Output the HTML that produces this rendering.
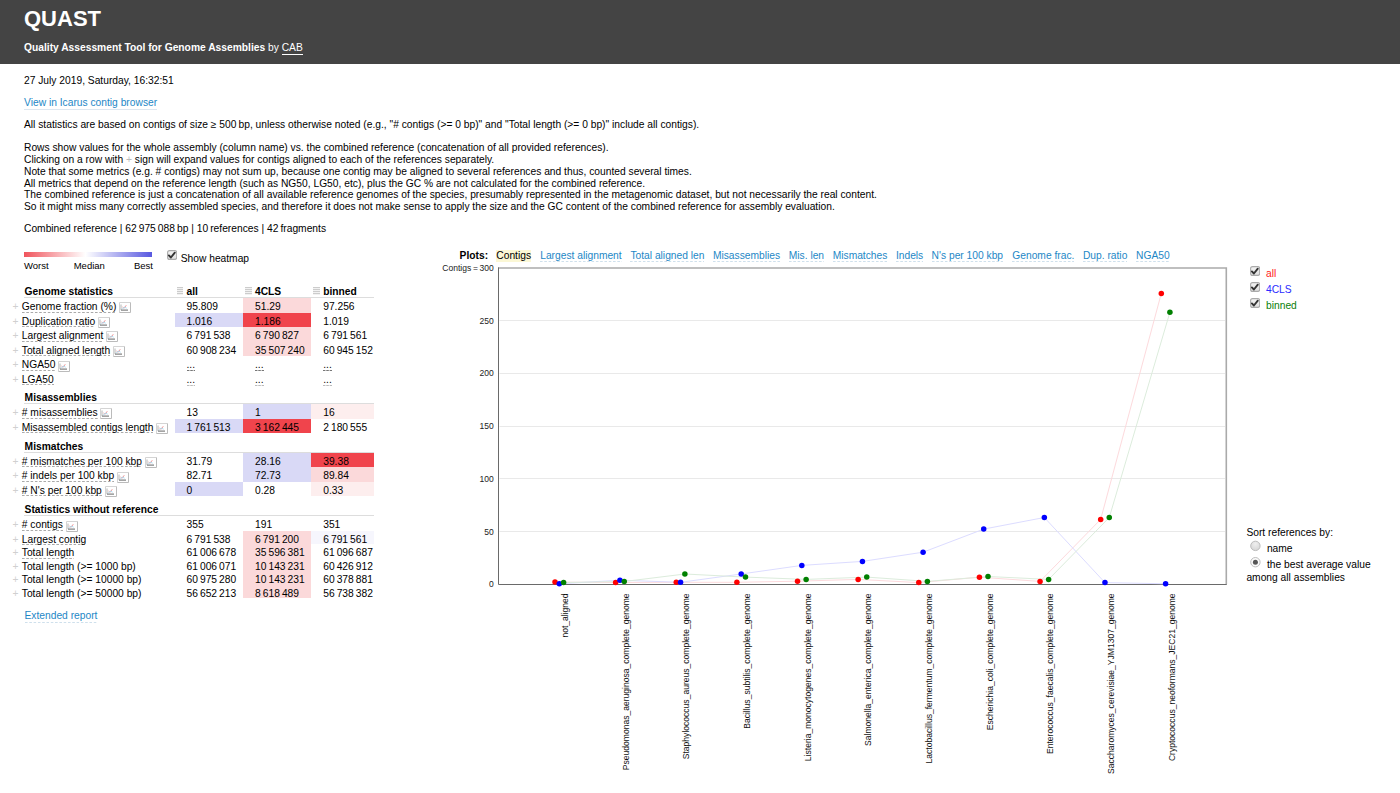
<!DOCTYPE html>
<html><head><meta charset="utf-8">
<style>
html,body{margin:0;padding:0;background:#fff;}
body{width:1400px;height:793px;overflow:hidden;position:relative;font-family:"Liberation Sans",sans-serif;font-size:10.25px;color:#000;}
.a{position:absolute;white-space:nowrap;line-height:12px;}
.b{font-weight:bold;}
#hdr{position:absolute;left:0;top:0;width:1400px;height:64px;background:#444;}
#hdr .t{position:absolute;left:24px;top:5px;font-weight:bold;font-size:22px;line-height:28px;color:#fff;}
#hdr .s{position:absolute;left:24px;top:41.8px;font-size:10.25px;line-height:12px;color:#fff;white-space:nowrap;}
#hdr .s b{font-weight:bold;}
#hdr .s u{text-decoration:none;border-bottom:1px solid #fff;padding-bottom:1px;}
.lnk{color:#1d87c6;}
.ul{border-bottom:1px solid #dde7f0;padding-bottom:1px;}
.dul{background-image:linear-gradient(to right,#aaa 60%,transparent 60%);background-size:4.3px 1px;background-repeat:repeat-x;background-position:0 100%;padding-bottom:0.5px;}
.dot{background-image:linear-gradient(to right,var(--dc) 75%,transparent 75%);background-size:3.3px 1px;background-repeat:repeat-x;background-position:0 100%;padding-bottom:1px;}
.ldul{background-image:linear-gradient(to right,#cfe0ec 60%,transparent 60%);background-size:4.3px 1px;background-repeat:repeat-x;background-position:0 100%;padding-bottom:2px;}
.pl{color:#d0d0d0;}
.ic{vertical-align:-3.4px;}
.cell{position:absolute;}
.sep{position:absolute;left:24px;width:350px;height:1px;background:#ddd;}
.hd{position:absolute;width:6.5px;height:8px;background:repeating-linear-gradient(to bottom,#ccc 0,#ccc 1.3px,#f2f2f2 1.3px,#f2f2f2 2px);}
.cb{position:absolute;width:10.3px;height:10px;}
.tab{position:absolute;white-space:nowrap;line-height:12px;color:#1d87c6;}
.tab span{background-image:linear-gradient(to right,#cfe0ec 60%,transparent 60%);background-size:4.3px 1px;background-repeat:repeat-x;background-position:0 100%;padding-bottom:1.5px;}
</style></head><body>
<div id="hdr">
<div class="t">QUAST</div>
<div class="s"><b>Quality Assessment Tool for Genome Assemblies</b> by <u>CAB</u></div>
</div>

<div class="a" style="left:24px;top:75.3px">27 July 2019, Saturday, 16:32:51</div>
<div class="a lnk" style="left:24px;top:96.9px"><span class="ul">View in Icarus contig browser</span></div>
<div class="a" style="left:24px;top:119.3px">All statistics are based on contigs of size ≥ 500&#8201;bp, unless otherwise noted (e.g., "# contigs (&gt;= 0 bp)" and "Total length (&gt;= 0 bp)" include all contigs).</div>
<div class="a" style="left:24px;top:141.9px;line-height:11.88px">Rows show values for the whole assembly (column name) vs. the combined reference (concatenation of all provided references).<br>Clicking on a row with <span style="color:#bbb">+</span> sign will expand values for contigs aligned to each of the references separately.<br>Note that some metrics (e.g. # contigs) may not sum up, because one contig may be aligned to several references and thus, counted several times.<br>All metrics that depend on the reference length (such as NG50, LG50, etc), plus the GC % are not calculated for the combined reference.<br>The combined reference is just a concatenation of all available reference genomes of the species, presumably represented in the metagenomic dataset, but not necessarily the real content.<br>So it might miss many correctly assembled species, and therefore it does not make sense to apply the size and the GC content of the combined reference for assembly evaluation.</div>
<div class="a" style="left:24px;top:223.1px">Combined reference | 62&#8201;975&#8201;088&#8201;bp | 10&#8201;references | 42&#8201;fragments</div>

<!-- heatmap legend -->
<div style="position:absolute;left:24px;top:252px;width:128.3px;height:5px;background:linear-gradient(to right,#f0545c,#fff 48%,#5858e0)"></div>
<div class="a" style="left:24px;top:260.2px;font-size:9.5px;line-height:11px">Worst</div>
<div class="a" style="left:73.7px;top:260.2px;font-size:9.5px;line-height:11px">Median</div>
<div class="a" style="left:133.9px;top:260.2px;font-size:9.5px;line-height:11px">Best</div>
<div class="cb" style="left:167.1px;top:250.4px"><svg width="10.3" height="10" viewBox="0 0 10.3 10"><defs><linearGradient id="cg" x1="0" y1="0" x2="0" y2="1"><stop offset="0" stop-color="#f4f4f4"/><stop offset="1" stop-color="#dedede"/></linearGradient></defs><rect x="0.6" y="0.6" width="9.1" height="8.8" rx="2" fill="url(#cg)" stroke="#aaa" stroke-width="1.1"/><path d="M1.9 5.4 L3.9 7.5 L7.8 2.7" stroke="#333" stroke-width="1.9" fill="none" stroke-linecap="round" stroke-linejoin="round"/></svg></div>
<div class="a" style="left:180.7px;top:252.8px">Show heatmap</div>

<div class="a b" style="left:24.6px;top:286.00px">Genome statistics</div>
<div class="hd" style="left:176.70px;top:286.75px"></div>
<div class="a b" style="left:186.50px;top:286.00px">all</div>
<div class="hd" style="left:245.20px;top:286.75px"></div>
<div class="a b" style="left:255.00px;top:286.00px">4CLS</div>
<div class="hd" style="left:313.40px;top:286.75px"></div>
<div class="a b" style="left:323.20px;top:286.00px">binned</div>
<div class="sep" style="top:297.00px"></div>
<div class="cell" style="left:243.0px;top:298.00px;width:68.20px;height:14.55px;background:#fbd9da"></div>
<div class="a pl" style="left:12.6px;top:301.00px">+</div>
<div class="a" style="left:21.8px;top:301.00px"><span class="dul">Genome fraction (%)</span> <svg class="ic" width="12" height="11" viewBox="0 0 12 11"><path d="M0.5 10.5V0.5H11.5" fill="none" stroke="#d4d4d4"/><path d="M11.5 0.5V10.5H0.5" fill="none" stroke="#bbb"/><path d="M2 2.5V8.1" stroke="#aaa" stroke-width="0.9"/><path d="M2 8.1H9" stroke="#555" stroke-width="0.9"/><path d="M3.4 5L5.2 6.2 7.3 3.2" stroke="#f29a9a" fill="none" stroke-width="1"/><path d="M3.2 7.2L5.3 5 7.6 6.2" stroke="#a8dcf2" fill="none" stroke-width="1"/></svg></div>
<div class="a" style="left:186.50px;top:301.00px">95.809</div>
<div class="a" style="left:255.00px;top:301.00px">51.29</div>
<div class="a" style="left:323.20px;top:301.00px">97.256</div>
<div class="cell" style="left:174.5px;top:312.55px;width:68.50px;height:14.55px;background:#d9d9f6"></div>
<div class="cell" style="left:243.0px;top:312.55px;width:68.20px;height:14.55px;background:#f0444c"></div>
<div class="a pl" style="left:12.6px;top:315.55px">+</div>
<div class="a" style="left:21.8px;top:315.55px"><span class="dul">Duplication ratio</span> <svg class="ic" width="12" height="11" viewBox="0 0 12 11"><path d="M0.5 10.5V0.5H11.5" fill="none" stroke="#d4d4d4"/><path d="M11.5 0.5V10.5H0.5" fill="none" stroke="#bbb"/><path d="M2 2.5V8.1" stroke="#aaa" stroke-width="0.9"/><path d="M2 8.1H9" stroke="#555" stroke-width="0.9"/><path d="M3.4 5L5.2 6.2 7.3 3.2" stroke="#f29a9a" fill="none" stroke-width="1"/><path d="M3.2 7.2L5.3 5 7.6 6.2" stroke="#a8dcf2" fill="none" stroke-width="1"/></svg></div>
<div class="a" style="left:186.50px;top:315.55px">1.016</div>
<div class="a" style="left:255.00px;top:315.55px">1.186</div>
<div class="a" style="left:323.20px;top:315.55px">1.019</div>
<div class="cell" style="left:243.0px;top:327.10px;width:68.20px;height:14.55px;background:#fbd9da"></div>
<div class="a pl" style="left:12.6px;top:330.10px">+</div>
<div class="a" style="left:21.8px;top:330.10px"><span class="dul">Largest alignment</span> <svg class="ic" width="12" height="11" viewBox="0 0 12 11"><path d="M0.5 10.5V0.5H11.5" fill="none" stroke="#d4d4d4"/><path d="M11.5 0.5V10.5H0.5" fill="none" stroke="#bbb"/><path d="M2 2.5V8.1" stroke="#aaa" stroke-width="0.9"/><path d="M2 8.1H9" stroke="#555" stroke-width="0.9"/><path d="M3.4 5L5.2 6.2 7.3 3.2" stroke="#f29a9a" fill="none" stroke-width="1"/><path d="M3.2 7.2L5.3 5 7.6 6.2" stroke="#a8dcf2" fill="none" stroke-width="1"/></svg></div>
<div class="a" style="left:186.50px;top:330.10px">6&#8201;791&#8201;538</div>
<div class="a" style="left:255.00px;top:330.10px">6&#8201;790&#8201;827</div>
<div class="a" style="left:323.20px;top:330.10px">6&#8201;791&#8201;561</div>
<div class="cell" style="left:243.0px;top:341.65px;width:68.20px;height:14.55px;background:#fbd9da"></div>
<div class="a pl" style="left:12.6px;top:344.65px">+</div>
<div class="a" style="left:21.8px;top:344.65px"><span class="dul">Total aligned length</span> <svg class="ic" width="12" height="11" viewBox="0 0 12 11"><path d="M0.5 10.5V0.5H11.5" fill="none" stroke="#d4d4d4"/><path d="M11.5 0.5V10.5H0.5" fill="none" stroke="#bbb"/><path d="M2 2.5V8.1" stroke="#aaa" stroke-width="0.9"/><path d="M2 8.1H9" stroke="#555" stroke-width="0.9"/><path d="M3.4 5L5.2 6.2 7.3 3.2" stroke="#f29a9a" fill="none" stroke-width="1"/><path d="M3.2 7.2L5.3 5 7.6 6.2" stroke="#a8dcf2" fill="none" stroke-width="1"/></svg></div>
<div class="a" style="left:186.50px;top:344.65px">60&#8201;908&#8201;234</div>
<div class="a" style="left:255.00px;top:344.65px">35&#8201;507&#8201;240</div>
<div class="a" style="left:323.20px;top:344.65px">60&#8201;945&#8201;152</div>
<div class="a pl" style="left:12.6px;top:359.20px">+</div>
<div class="a" style="left:21.8px;top:359.20px"><span class="dul">NGA50</span> <svg class="ic" width="12" height="11" viewBox="0 0 12 11"><path d="M0.5 10.5V0.5H11.5" fill="none" stroke="#d4d4d4"/><path d="M11.5 0.5V10.5H0.5" fill="none" stroke="#bbb"/><path d="M2 2.5V8.1" stroke="#aaa" stroke-width="0.9"/><path d="M2 8.1H9" stroke="#555" stroke-width="0.9"/><path d="M3.4 5L5.2 6.2 7.3 3.2" stroke="#f29a9a" fill="none" stroke-width="1"/><path d="M3.2 7.2L5.3 5 7.6 6.2" stroke="#a8dcf2" fill="none" stroke-width="1"/></svg></div>
<div class="a" style="left:186.50px;top:359.20px"><span class="dot" style="--dc:#777">...</span></div>
<div class="a" style="left:255.00px;top:359.20px"><span class="dot" style="--dc:#777">...</span></div>
<div class="a" style="left:323.20px;top:359.20px"><span class="dot" style="--dc:#777">...</span></div>
<div class="a pl" style="left:12.6px;top:373.75px">+</div>
<div class="a" style="left:21.8px;top:373.75px"><span class="dul">LGA50</span></div>
<div class="a" style="left:186.50px;top:373.75px"><span class="dot" style="--dc:#bbb">...</span></div>
<div class="a" style="left:255.00px;top:373.75px"><span class="dot" style="--dc:#bbb">...</span></div>
<div class="a" style="left:323.20px;top:373.75px"><span class="dot" style="--dc:#bbb">...</span></div>
<div class="a b" style="left:24.6px;top:392.00px">Misassemblies</div>
<div class="sep" style="top:403.00px"></div>
<div class="cell" style="left:243.0px;top:404.00px;width:68.20px;height:14.55px;background:#d9d9f6"></div>
<div class="cell" style="left:311.2px;top:404.00px;width:62.80px;height:14.55px;background:#fdeeee"></div>
<div class="a pl" style="left:12.6px;top:407.00px">+</div>
<div class="a" style="left:21.8px;top:407.00px"><span class="dul"># misassemblies</span> <svg class="ic" width="12" height="11" viewBox="0 0 12 11"><path d="M0.5 10.5V0.5H11.5" fill="none" stroke="#d4d4d4"/><path d="M11.5 0.5V10.5H0.5" fill="none" stroke="#bbb"/><path d="M2 2.5V8.1" stroke="#aaa" stroke-width="0.9"/><path d="M2 8.1H9" stroke="#555" stroke-width="0.9"/><path d="M3.4 5L5.2 6.2 7.3 3.2" stroke="#f29a9a" fill="none" stroke-width="1"/><path d="M3.2 7.2L5.3 5 7.6 6.2" stroke="#a8dcf2" fill="none" stroke-width="1"/></svg></div>
<div class="a" style="left:186.50px;top:407.00px">13</div>
<div class="a" style="left:255.00px;top:407.00px">1</div>
<div class="a" style="left:323.20px;top:407.00px">16</div>
<div class="cell" style="left:174.5px;top:418.55px;width:68.50px;height:14.55px;background:#d9d9f6"></div>
<div class="cell" style="left:243.0px;top:418.55px;width:68.20px;height:14.55px;background:#f0444c"></div>
<div class="a pl" style="left:12.6px;top:421.55px">+</div>
<div class="a" style="left:21.8px;top:421.55px"><span class="dul">Misassembled contigs length</span> <svg class="ic" width="12" height="11" viewBox="0 0 12 11"><path d="M0.5 10.5V0.5H11.5" fill="none" stroke="#d4d4d4"/><path d="M11.5 0.5V10.5H0.5" fill="none" stroke="#bbb"/><path d="M2 2.5V8.1" stroke="#aaa" stroke-width="0.9"/><path d="M2 8.1H9" stroke="#555" stroke-width="0.9"/><path d="M3.4 5L5.2 6.2 7.3 3.2" stroke="#f29a9a" fill="none" stroke-width="1"/><path d="M3.2 7.2L5.3 5 7.6 6.2" stroke="#a8dcf2" fill="none" stroke-width="1"/></svg></div>
<div class="a" style="left:186.50px;top:421.55px">1&#8201;761&#8201;513</div>
<div class="a" style="left:255.00px;top:421.55px">3&#8201;162&#8201;445</div>
<div class="a" style="left:323.20px;top:421.55px">2&#8201;180&#8201;555</div>
<div class="a b" style="left:24.6px;top:440.85px">Mismatches</div>
<div class="sep" style="top:451.85px"></div>
<div class="cell" style="left:243.0px;top:452.85px;width:68.20px;height:14.55px;background:#d9d9f6"></div>
<div class="cell" style="left:311.2px;top:452.85px;width:62.80px;height:14.55px;background:#f0444c"></div>
<div class="a pl" style="left:12.6px;top:455.85px">+</div>
<div class="a" style="left:21.8px;top:455.85px"><span class="dul"># mismatches per 100 kbp</span> <svg class="ic" width="12" height="11" viewBox="0 0 12 11"><path d="M0.5 10.5V0.5H11.5" fill="none" stroke="#d4d4d4"/><path d="M11.5 0.5V10.5H0.5" fill="none" stroke="#bbb"/><path d="M2 2.5V8.1" stroke="#aaa" stroke-width="0.9"/><path d="M2 8.1H9" stroke="#555" stroke-width="0.9"/><path d="M3.4 5L5.2 6.2 7.3 3.2" stroke="#f29a9a" fill="none" stroke-width="1"/><path d="M3.2 7.2L5.3 5 7.6 6.2" stroke="#a8dcf2" fill="none" stroke-width="1"/></svg></div>
<div class="a" style="left:186.50px;top:455.85px">31.79</div>
<div class="a" style="left:255.00px;top:455.85px">28.16</div>
<div class="a" style="left:323.20px;top:455.85px">39.38</div>
<div class="cell" style="left:243.0px;top:467.40px;width:68.20px;height:14.55px;background:#d9d9f6"></div>
<div class="cell" style="left:311.2px;top:467.40px;width:62.80px;height:14.55px;background:#fbd9da"></div>
<div class="a pl" style="left:12.6px;top:470.40px">+</div>
<div class="a" style="left:21.8px;top:470.40px"><span class="dul"># indels per 100 kbp</span> <svg class="ic" width="12" height="11" viewBox="0 0 12 11"><path d="M0.5 10.5V0.5H11.5" fill="none" stroke="#d4d4d4"/><path d="M11.5 0.5V10.5H0.5" fill="none" stroke="#bbb"/><path d="M2 2.5V8.1" stroke="#aaa" stroke-width="0.9"/><path d="M2 8.1H9" stroke="#555" stroke-width="0.9"/><path d="M3.4 5L5.2 6.2 7.3 3.2" stroke="#f29a9a" fill="none" stroke-width="1"/><path d="M3.2 7.2L5.3 5 7.6 6.2" stroke="#a8dcf2" fill="none" stroke-width="1"/></svg></div>
<div class="a" style="left:186.50px;top:470.40px">82.71</div>
<div class="a" style="left:255.00px;top:470.40px">72.73</div>
<div class="a" style="left:323.20px;top:470.40px">89.84</div>
<div class="cell" style="left:174.5px;top:481.95px;width:68.50px;height:14.55px;background:#d9d9f6"></div>
<div class="cell" style="left:311.2px;top:481.95px;width:62.80px;height:14.55px;background:#fdeeee"></div>
<div class="a pl" style="left:12.6px;top:484.95px">+</div>
<div class="a" style="left:21.8px;top:484.95px"><span class="dul"># N's per 100 kbp</span> <svg class="ic" width="12" height="11" viewBox="0 0 12 11"><path d="M0.5 10.5V0.5H11.5" fill="none" stroke="#d4d4d4"/><path d="M11.5 0.5V10.5H0.5" fill="none" stroke="#bbb"/><path d="M2 2.5V8.1" stroke="#aaa" stroke-width="0.9"/><path d="M2 8.1H9" stroke="#555" stroke-width="0.9"/><path d="M3.4 5L5.2 6.2 7.3 3.2" stroke="#f29a9a" fill="none" stroke-width="1"/><path d="M3.2 7.2L5.3 5 7.6 6.2" stroke="#a8dcf2" fill="none" stroke-width="1"/></svg></div>
<div class="a" style="left:186.50px;top:484.95px">0</div>
<div class="a" style="left:255.00px;top:484.95px">0.28</div>
<div class="a" style="left:323.20px;top:484.95px">0.33</div>
<div class="a b" style="left:24.6px;top:504.25px">Statistics without reference</div>
<div class="sep" style="top:515.25px"></div>
<div class="a pl" style="left:12.6px;top:519.25px">+</div>
<div class="a" style="left:21.8px;top:519.25px"><span class="dul"># contigs</span> <svg class="ic" width="12" height="11" viewBox="0 0 12 11"><path d="M0.5 10.5V0.5H11.5" fill="none" stroke="#d4d4d4"/><path d="M11.5 0.5V10.5H0.5" fill="none" stroke="#bbb"/><path d="M2 2.5V8.1" stroke="#aaa" stroke-width="0.9"/><path d="M2 8.1H9" stroke="#555" stroke-width="0.9"/><path d="M3.4 5L5.2 6.2 7.3 3.2" stroke="#f29a9a" fill="none" stroke-width="1"/><path d="M3.2 7.2L5.3 5 7.6 6.2" stroke="#a8dcf2" fill="none" stroke-width="1"/></svg></div>
<div class="a" style="left:186.50px;top:519.25px">355</div>
<div class="a" style="left:255.00px;top:519.25px">191</div>
<div class="a" style="left:323.20px;top:519.25px">351</div>
<div class="cell" style="left:243.0px;top:530.80px;width:68.20px;height:13.50px;background:#fbd9da"></div>
<div class="cell" style="left:311.2px;top:530.80px;width:62.80px;height:13.50px;background:#f6f6fd"></div>
<div class="a pl" style="left:12.6px;top:533.80px">+</div>
<div class="a" style="left:21.8px;top:533.80px"><span class="dul">Largest contig</span></div>
<div class="a" style="left:186.50px;top:533.80px">6&#8201;791&#8201;538</div>
<div class="a" style="left:255.00px;top:533.80px">6&#8201;791&#8201;200</div>
<div class="a" style="left:323.20px;top:533.80px">6&#8201;791&#8201;561</div>
<div class="cell" style="left:243.0px;top:544.30px;width:68.20px;height:13.50px;background:#fbd9da"></div>
<div class="a pl" style="left:12.6px;top:547.30px">+</div>
<div class="a" style="left:21.8px;top:547.30px"><span class="dul">Total length</span></div>
<div class="a" style="left:186.50px;top:547.30px">61&#8201;006&#8201;678</div>
<div class="a" style="left:255.00px;top:547.30px">35&#8201;596&#8201;381</div>
<div class="a" style="left:323.20px;top:547.30px">61&#8201;096&#8201;687</div>
<div class="cell" style="left:243.0px;top:557.80px;width:68.20px;height:13.50px;background:#fbd9da"></div>
<div class="a pl" style="left:12.6px;top:560.80px">+</div>
<div class="a" style="left:21.8px;top:560.80px"><span class="">Total length (&gt;= 1000 bp)</span></div>
<div class="a" style="left:186.50px;top:560.80px">61&#8201;006&#8201;071</div>
<div class="a" style="left:255.00px;top:560.80px">10&#8201;143&#8201;231</div>
<div class="a" style="left:323.20px;top:560.80px">60&#8201;426&#8201;912</div>
<div class="cell" style="left:243.0px;top:571.30px;width:68.20px;height:13.50px;background:#fbd9da"></div>
<div class="a pl" style="left:12.6px;top:574.30px">+</div>
<div class="a" style="left:21.8px;top:574.30px"><span class="">Total length (&gt;= 10000 bp)</span></div>
<div class="a" style="left:186.50px;top:574.30px">60&#8201;975&#8201;280</div>
<div class="a" style="left:255.00px;top:574.30px">10&#8201;143&#8201;231</div>
<div class="a" style="left:323.20px;top:574.30px">60&#8201;378&#8201;881</div>
<div class="cell" style="left:243.0px;top:584.80px;width:68.20px;height:13.50px;background:#fbd9da"></div>
<div class="a pl" style="left:12.6px;top:587.80px">+</div>
<div class="a" style="left:21.8px;top:587.80px"><span class="">Total length (&gt;= 50000 bp)</span></div>
<div class="a" style="left:186.50px;top:587.80px">56&#8201;652&#8201;213</div>
<div class="a" style="left:255.00px;top:587.80px">8&#8201;618&#8201;489</div>
<div class="a" style="left:323.20px;top:587.80px">56&#8201;738&#8201;382</div>
<div class="a b" style="left:459.6px;top:249.7px">Plots:</div>
<div class="a" style="left:496px;top:249.7px;background:#fbf7d5;height:12.6px;width:35px"></div>
<div class="a" style="left:496.3px;top:249.7px">Contigs</div>
<div class="tab" style="left:540.2px;top:249.7px"><span>Largest alignment</span></div>
<div class="tab" style="left:630.4px;top:249.7px"><span>Total aligned len</span></div>
<div class="tab" style="left:712.9px;top:249.7px"><span>Misassemblies</span></div>
<div class="tab" style="left:788.75px;top:249.7px"><span>Mis. len</span></div>
<div class="tab" style="left:832.7px;top:249.7px"><span>Mismatches</span></div>
<div class="tab" style="left:895.9px;top:249.7px"><span>Indels</span></div>
<div class="tab" style="left:931.6px;top:249.7px"><span>N's per 100 kbp</span></div>
<div class="tab" style="left:1012.3px;top:249.7px"><span>Genome frac.</span></div>
<div class="tab" style="left:1082.9px;top:249.7px"><span>Dup. ratio</span></div>
<div class="tab" style="left:1136.0px;top:249.7px"><span>NGA50</span></div>
<svg style="position:absolute;left:0;top:0" width="1400" height="793">
<line x1="499.5" y1="531.5" x2="1225" y2="531.5" stroke="#e9e9e9" stroke-width="1"/>
<line x1="499.5" y1="478.5" x2="1225" y2="478.5" stroke="#e9e9e9" stroke-width="1"/>
<line x1="499.5" y1="426.5" x2="1225" y2="426.5" stroke="#e9e9e9" stroke-width="1"/>
<line x1="499.5" y1="373.5" x2="1225" y2="373.5" stroke="#e9e9e9" stroke-width="1"/>
<line x1="499.5" y1="320.5" x2="1225" y2="320.5" stroke="#e9e9e9" stroke-width="1"/>
<path d="M498.5 268 H1226.3 V584" stroke="#aaa" stroke-width="1.6" fill="none"/>
<path d="M498.5 267.3 V584.5 H1226.8" stroke="#6a6a6a" stroke-width="1" fill="none"/>
<text transform="translate(493.8,270.90) scale(0.87,1)" text-anchor="end" font-family="Liberation Sans" font-size="9.8" fill="#222">Contigs&#8201;=&#8201;300</text>
<text transform="translate(493.8,323.63) scale(0.87,1)" text-anchor="end" font-family="Liberation Sans" font-size="9.8" fill="#222">250</text>
<text transform="translate(493.8,376.37) scale(0.87,1)" text-anchor="end" font-family="Liberation Sans" font-size="9.8" fill="#222">200</text>
<text transform="translate(493.8,429.10) scale(0.87,1)" text-anchor="end" font-family="Liberation Sans" font-size="9.8" fill="#222">150</text>
<text transform="translate(493.8,481.83) scale(0.87,1)" text-anchor="end" font-family="Liberation Sans" font-size="9.8" fill="#222">100</text>
<text transform="translate(493.8,534.57) scale(0.87,1)" text-anchor="end" font-family="Liberation Sans" font-size="9.8" fill="#222">50</text>
<text transform="translate(493.8,587.30) scale(0.87,1)" text-anchor="end" font-family="Liberation Sans" font-size="9.8" fill="#222">0</text>
<polyline points="555.00,582.10 615.63,582.50 676.26,582.30 736.89,582.30 797.52,581.20 858.15,579.40 918.78,582.60 979.41,577.20 1040.04,581.40 1100.67,519.40 1161.30,293.40" fill="none" stroke="#fddadd" stroke-width="1"/>
<polyline points="559.30,583.80 619.93,580.20 680.56,582.30 741.19,574.00 801.82,565.40 862.45,561.40 923.08,552.20 983.71,529.10 1044.34,517.50 1104.97,582.60 1165.60,583.80" fill="none" stroke="#dcdcff" stroke-width="1"/>
<polyline points="563.60,582.50 624.23,581.50 684.86,574.00 745.49,577.10 806.12,579.40 866.75,577.10 927.38,581.40 988.01,576.50 1048.64,579.40 1109.27,517.50 1169.90,312.30" fill="none" stroke="#dcecdc" stroke-width="1"/>
<circle cx="555.00" cy="582.10" r="2.75" fill="#ff0000"/>
<circle cx="615.63" cy="582.50" r="2.75" fill="#ff0000"/>
<circle cx="676.26" cy="582.30" r="2.75" fill="#ff0000"/>
<circle cx="736.89" cy="582.30" r="2.75" fill="#ff0000"/>
<circle cx="797.52" cy="581.20" r="2.75" fill="#ff0000"/>
<circle cx="858.15" cy="579.40" r="2.75" fill="#ff0000"/>
<circle cx="918.78" cy="582.60" r="2.75" fill="#ff0000"/>
<circle cx="979.41" cy="577.20" r="2.75" fill="#ff0000"/>
<circle cx="1040.04" cy="581.40" r="2.75" fill="#ff0000"/>
<circle cx="1100.67" cy="519.40" r="2.75" fill="#ff0000"/>
<circle cx="1161.30" cy="293.40" r="2.75" fill="#ff0000"/>
<circle cx="559.30" cy="583.80" r="2.75" fill="#0000ff"/>
<circle cx="619.93" cy="580.20" r="2.75" fill="#0000ff"/>
<circle cx="680.56" cy="582.30" r="2.75" fill="#0000ff"/>
<circle cx="741.19" cy="574.00" r="2.75" fill="#0000ff"/>
<circle cx="801.82" cy="565.40" r="2.75" fill="#0000ff"/>
<circle cx="862.45" cy="561.40" r="2.75" fill="#0000ff"/>
<circle cx="923.08" cy="552.20" r="2.75" fill="#0000ff"/>
<circle cx="983.71" cy="529.10" r="2.75" fill="#0000ff"/>
<circle cx="1044.34" cy="517.50" r="2.75" fill="#0000ff"/>
<circle cx="1104.97" cy="582.60" r="2.75" fill="#0000ff"/>
<circle cx="1165.60" cy="583.80" r="2.75" fill="#0000ff"/>
<circle cx="563.60" cy="582.50" r="2.75" fill="#008000"/>
<circle cx="624.23" cy="581.50" r="2.75" fill="#008000"/>
<circle cx="684.86" cy="574.00" r="2.75" fill="#008000"/>
<circle cx="745.49" cy="577.10" r="2.75" fill="#008000"/>
<circle cx="806.12" cy="579.40" r="2.75" fill="#008000"/>
<circle cx="866.75" cy="577.10" r="2.75" fill="#008000"/>
<circle cx="927.38" cy="581.40" r="2.75" fill="#008000"/>
<circle cx="988.01" cy="576.50" r="2.75" fill="#008000"/>
<circle cx="1048.64" cy="579.40" r="2.75" fill="#008000"/>
<circle cx="1109.27" cy="517.50" r="2.75" fill="#008000"/>
<circle cx="1169.90" cy="312.30" r="2.75" fill="#008000"/>
<text transform="translate(568.20,593.4) rotate(-90)" text-anchor="end" font-family="Liberation Sans" font-size="8.55" fill="#111">not_aligned</text>
<text transform="translate(628.83,593.4) rotate(-90)" text-anchor="end" font-family="Liberation Sans" font-size="8.55" fill="#111">Pseudomonas_aeruginosa_complete_genome</text>
<text transform="translate(689.46,593.4) rotate(-90)" text-anchor="end" font-family="Liberation Sans" font-size="8.55" fill="#111">Staphylococcus_aureus_complete_genome</text>
<text transform="translate(750.09,593.4) rotate(-90)" text-anchor="end" font-family="Liberation Sans" font-size="8.55" fill="#111">Bacillus_subtilis_complete_genome</text>
<text transform="translate(810.72,593.4) rotate(-90)" text-anchor="end" font-family="Liberation Sans" font-size="8.55" fill="#111">Listeria_monocytogenes_complete_genome</text>
<text transform="translate(871.35,593.4) rotate(-90)" text-anchor="end" font-family="Liberation Sans" font-size="8.55" fill="#111">Salmonella_enterica_complete_genome</text>
<text transform="translate(931.98,593.4) rotate(-90)" text-anchor="end" font-family="Liberation Sans" font-size="8.55" fill="#111">Lactobacillus_fermentum_complete_genome</text>
<text transform="translate(992.61,593.4) rotate(-90)" text-anchor="end" font-family="Liberation Sans" font-size="8.55" fill="#111">Escherichia_coli_complete_genome</text>
<text transform="translate(1053.24,593.4) rotate(-90)" text-anchor="end" font-family="Liberation Sans" font-size="8.55" fill="#111">Enterococcus_faecalis_complete_genome</text>
<text transform="translate(1113.87,593.4) rotate(-90)" text-anchor="end" font-family="Liberation Sans" font-size="8.55" fill="#111">Saccharomyces_cerevisiae_YJM1307_genome</text>
<text transform="translate(1174.50,593.4) rotate(-90)" text-anchor="end" font-family="Liberation Sans" font-size="8.55" fill="#111">Cryptococcus_neoformans_JEC21_genome</text>
</svg>
<div class="cb" style="left:1249.6px;top:265.9px"><svg width="10.3" height="10" viewBox="0 0 10.3 10"><defs><linearGradient id="cg0" x1="0" y1="0" x2="0" y2="1"><stop offset="0" stop-color="#f4f4f4"/><stop offset="1" stop-color="#dedede"/></linearGradient></defs><rect x="0.6" y="0.6" width="9.1" height="8.8" rx="2" fill="url(#cg0)" stroke="#aaa" stroke-width="1.1"/><path d="M1.9 5.4 L3.9 7.5 L7.8 2.7" stroke="#333" stroke-width="1.9" fill="none" stroke-linecap="round" stroke-linejoin="round"/></svg></div>
<div class="a" style="left:1266px;top:267.5px;color:#ff1a1a">all</div>
<div class="cb" style="left:1249.6px;top:281.9px"><svg width="10.3" height="10" viewBox="0 0 10.3 10"><defs><linearGradient id="cg1" x1="0" y1="0" x2="0" y2="1"><stop offset="0" stop-color="#f4f4f4"/><stop offset="1" stop-color="#dedede"/></linearGradient></defs><rect x="0.6" y="0.6" width="9.1" height="8.8" rx="2" fill="url(#cg1)" stroke="#aaa" stroke-width="1.1"/><path d="M1.9 5.4 L3.9 7.5 L7.8 2.7" stroke="#333" stroke-width="1.9" fill="none" stroke-linecap="round" stroke-linejoin="round"/></svg></div>
<div class="a" style="left:1266px;top:283.5px;color:#2b2bff">4CLS</div>
<div class="cb" style="left:1249.6px;top:297.9px"><svg width="10.3" height="10" viewBox="0 0 10.3 10"><defs><linearGradient id="cg2" x1="0" y1="0" x2="0" y2="1"><stop offset="0" stop-color="#f4f4f4"/><stop offset="1" stop-color="#dedede"/></linearGradient></defs><rect x="0.6" y="0.6" width="9.1" height="8.8" rx="2" fill="url(#cg2)" stroke="#aaa" stroke-width="1.1"/><path d="M1.9 5.4 L3.9 7.5 L7.8 2.7" stroke="#333" stroke-width="1.9" fill="none" stroke-linecap="round" stroke-linejoin="round"/></svg></div>
<div class="a" style="left:1266px;top:299.5px;color:#0a800a">binned</div>
<div class="a" style="left:1246.4px;top:526.5px">Sort references by:</div>
<svg style="position:absolute;left:1249px;top:539px" width="14" height="30"><defs><radialGradient id="rg" cx="0.5" cy="0.3" r="0.7"><stop offset="0" stop-color="#efefef"/><stop offset="1" stop-color="#d6d6d6"/></radialGradient></defs>
<circle cx="6.4" cy="6.9" r="4.7" fill="url(#rg)" stroke="#bdbdbd" stroke-width="1"/>
<circle cx="6.4" cy="23.2" r="4.7" fill="#fafafa" stroke="#bdbdbd" stroke-width="1"/><circle cx="6.4" cy="23.2" r="2.5" fill="#555"/></svg>
<div class="a" style="left:1266.9px;top:542.5px">name</div>
<div class="a" style="left:1266.9px;top:558.8px">the best average value</div>
<div class="a" style="left:1246.4px;top:571.5px">among all assemblies</div>


<div class="a lnk" style="left:24.5px;top:609.6px"><span class="ldul">Extended report</span></div>

</body></html>
